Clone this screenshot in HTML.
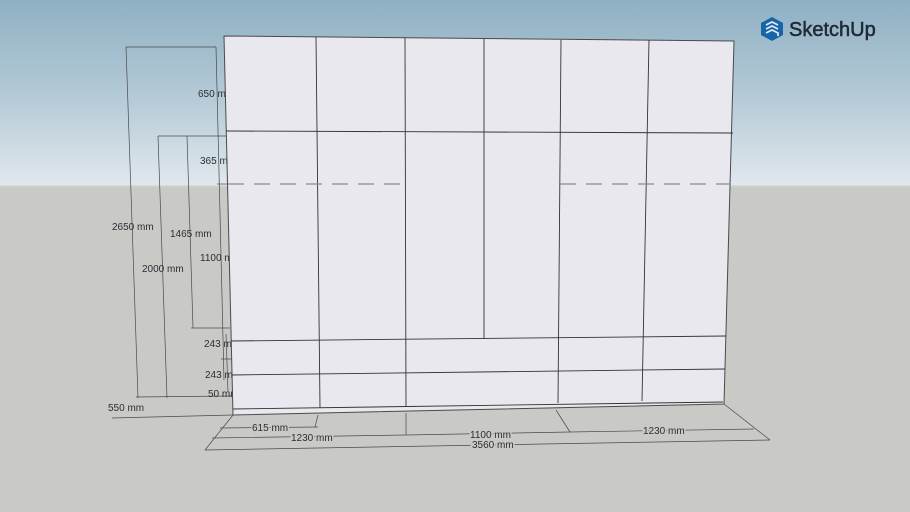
<!DOCTYPE html>
<html><head><meta charset="utf-8"><style>
html,body{margin:0;padding:0;width:910px;height:512px;overflow:hidden}
svg{display:block}
text{font-family:"Liberation Sans",sans-serif;font-size:10px;fill:#2a2f34}
.h{paint-order:stroke;stroke:#c9c9c5;stroke-width:3px}
</style></head><body>
<svg width="910" height="512" viewBox="0 0 910 512" xmlns="http://www.w3.org/2000/svg">
<defs>
<linearGradient id="sky" x1="0" y1="0" x2="0" y2="1">
<stop offset="0" stop-color="#8fb0c4"/>
<stop offset="0.5" stop-color="#b3c9d5"/>
<stop offset="1" stop-color="#e0e8ed"/>
</linearGradient>
</defs>
<rect x="0" y="0" width="910" height="186" fill="url(#sky)"/>
<rect x="0" y="185" width="910" height="327" fill="#c9c9c5"/>
<rect x="0" y="185" width="910" height="1.5" fill="#d8d8d4"/>

<g stroke="#4a4a4a" stroke-width="0.7" fill="none">
<line x1="126" y1="47" x2="216" y2="47"/>
<line x1="126" y1="47" x2="138" y2="398"/>
<line x1="216" y1="47" x2="224" y2="380"/>
<line x1="158" y1="136" x2="226" y2="136"/>
<line x1="158" y1="136" x2="167" y2="398"/>
<line x1="187" y1="136" x2="193" y2="328"/>
<line x1="217" y1="184" x2="230" y2="184"/>
<line x1="191" y1="328" x2="230" y2="328"/>
<line x1="221" y1="359" x2="232" y2="359"/>
<line x1="136" y1="397" x2="232" y2="396"/>
<line x1="112" y1="418" x2="233" y2="415"/>
<line x1="226" y1="334" x2="228" y2="392"/>
<line x1="220" y1="428" x2="318" y2="427"/>
<line x1="318" y1="415" x2="315" y2="427"/>
<line x1="212" y1="438" x2="406" y2="435"/>
<line x1="406" y1="413" x2="406" y2="435"/>
<line x1="406" y1="435" x2="570" y2="432"/>
<line x1="556" y1="410" x2="570" y2="432"/>
<line x1="570" y1="432" x2="754" y2="429"/>
<line x1="724" y1="404" x2="770" y2="440"/>
<line x1="205" y1="450" x2="770" y2="440"/>
<line x1="233" y1="415" x2="205" y2="450"/>
</g>
<g>
<text x="198" y="97">650 mm</text>
<text x="200" y="164">365 mm</text>
<text x="112" y="230">2650 mm</text>
<text x="170" y="237">1465 mm</text>
<text x="200" y="261">1100 mm</text>
<text x="142" y="272">2000 mm</text>
<text x="204" y="347">243 mm</text>
<text x="205" y="378">243 mm</text>
<text x="208" y="397">50 mm</text>
<text x="108" y="411">550 mm</text>
<text class="h" x="252" y="431">615 mm</text>
<text class="h" x="291" y="441">1230 mm</text>
<text class="h" x="470" y="438">1100 mm</text>
<text class="h" x="643" y="434">1230 mm</text>
<text class="h" x="472" y="448">3560 mm</text>
</g>

<polygon points="224,36 734,41 724,404 233,415" fill="#e9e8ee" stroke="#4a4a4a" stroke-width="1"/>
<g stroke="#333" stroke-width="0.9" fill="none">
<line x1="226" y1="131" x2="733" y2="133"/>
<line x1="231" y1="341" x2="726" y2="336"/>
<line x1="232" y1="375" x2="725" y2="369"/>
<line x1="233" y1="409" x2="723" y2="402"/>
<line x1="316" y1="37" x2="320" y2="408"/>
<line x1="405" y1="38" x2="406" y2="407"/>
<line x1="484" y1="39" x2="484" y2="339"/>
<line x1="561" y1="40" x2="558" y2="403"/>
<line x1="649" y1="40" x2="642" y2="401"/>
</g>
<g stroke="#8a8a8a" stroke-width="1.2" stroke-dasharray="16,10">
<line x1="228" y1="184" x2="402" y2="184"/>
<line x1="560" y1="184" x2="730" y2="184"/>
</g>

<g transform="translate(761,17)">
<path d="M11 0 L22 6 L22 18 L11 24 L0 18 L0 6 Z" fill="#1565a8"/>
<path d="M5 8 L11 5 L17 8 M5 12 L11 9 L17 12 M5 16 L11 13 L17 16 L17 19" stroke="#dfe9f0" stroke-width="1.8" fill="none"/>
</g>
<text x="789" y="36" style="font-size:20px;fill:#1e2a36;stroke:#1e2a36;stroke-width:0.5px;font-family:'Liberation Sans',sans-serif">SketchUp</text>
</svg>
</body></html>
